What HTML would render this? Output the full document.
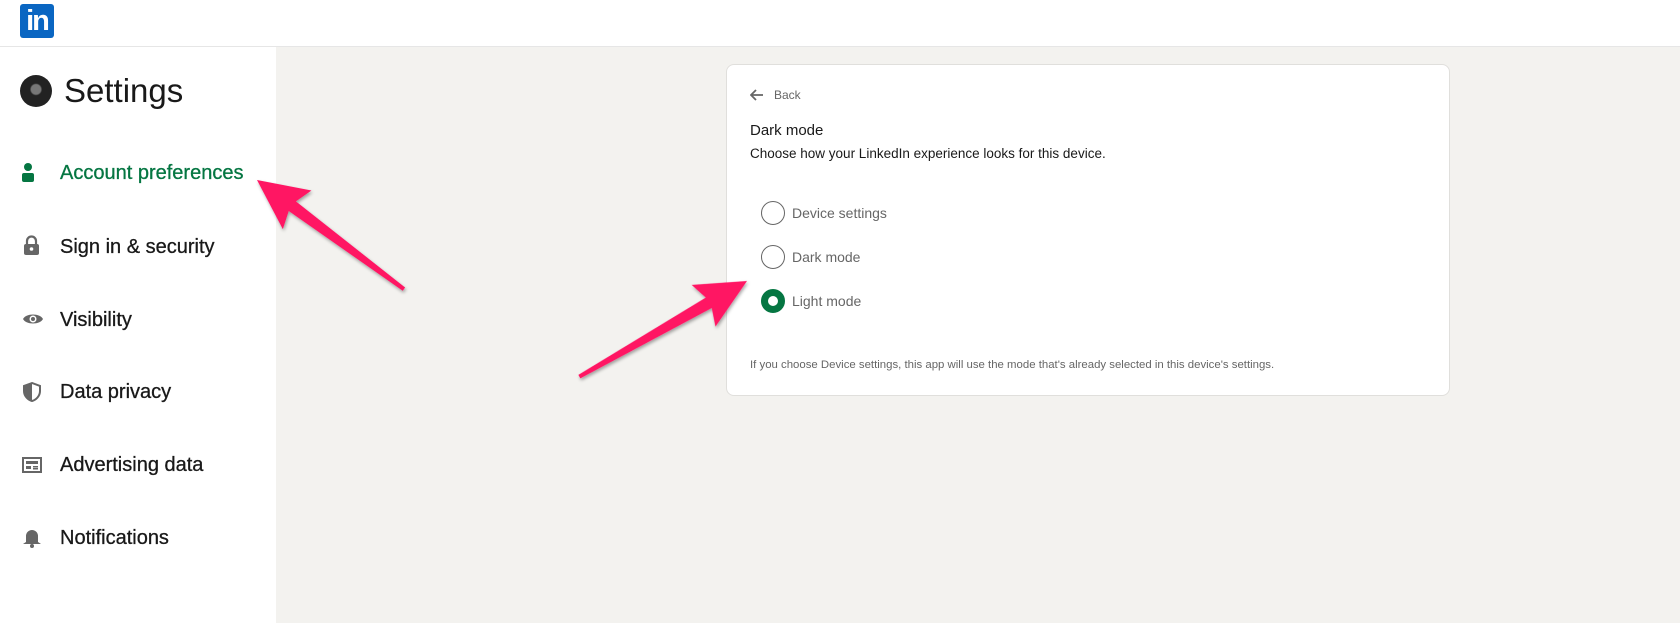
<!DOCTYPE html>
<html><head><meta charset="utf-8"><style>
*{margin:0;padding:0;box-sizing:border-box}
body{width:1680px;height:623px;overflow:hidden;background:#f3f2ef;font-family:"Liberation Sans",sans-serif;position:relative}
.hdr{position:absolute;left:0;top:0;width:1680px;height:47px;background:#fff;border-bottom:1px solid #e6e6e6}
.logo{position:absolute;left:20px;top:4px;width:34px;height:34px;background:#0a66c2;border-radius:3px;color:#fff;font-weight:bold;font-size:29px;line-height:35px;text-align:center;letter-spacing:-2px}
.side{position:absolute;left:0;top:47px;width:276px;height:576px;background:#fff}
.av{position:absolute;left:20px;top:75px;width:32px;height:32px;border-radius:50%;background:radial-gradient(circle at 50% 45%,#777 0 20%,#222 26%)}
.title{position:absolute;left:64px;top:72px;font-size:33px;color:#191919}
.item{position:absolute;left:60px;font-size:20px;color:#191919;line-height:24px;-webkit-text-stroke:0.3px currentColor}
.ic{position:absolute;left:22px}
.card{position:absolute;left:726px;top:64px;width:724px;height:332px;background:#fff;border-radius:8px;border:1px solid #e0dfdc}
.t{position:absolute;white-space:nowrap}
.radio{position:absolute;left:761px;width:24px;height:24px;border-radius:50%;border:1.5px solid #666}
</style></head><body>
<div class="hdr"><div class="logo">in</div></div>
<div class="side"></div>
<div class="av"></div>
<div class="title">Settings</div>
<svg class="ic" style="top:163px" width="12" height="20" viewBox="0 0 12 20"><circle cx="6" cy="4" r="4" fill="#057642"/><rect x="0" y="10" width="12" height="9" rx="2" fill="#057642"/></svg>
<div class="item" style="top:161px;color:#057642">Account preferences</div>
<svg class="ic" style="top:235px;left:23px" width="17" height="20" viewBox="0 0 17 20"><path d="M4 9V6a4.5 4.5 0 0 1 9 0v3" stroke="#666" stroke-width="2.2" fill="none"/><rect x="1" y="9" width="15" height="11" rx="2" fill="#666"/><circle cx="8.5" cy="14" r="1.8" fill="#fff"/></svg>
<div class="item" style="top:235px">Sign in &amp; security</div>
<svg class="ic" style="top:312px" width="22" height="14" viewBox="0 0 22 14"><path d="M1 7C4 1 18 1 21 7C18 13 4 13 1 7Z" fill="#666"/><circle cx="11" cy="7" r="3.5" fill="#fff"/><circle cx="11" cy="7" r="2" fill="#666"/></svg>
<div class="item" style="top:308px">Visibility</div>
<svg class="ic" style="top:382px;left:23px" width="18" height="20" viewBox="0 0 18 20"><path d="M9 1L1 4v5c0 5 4 9 8 10 4-1 8-5 8-10V4z" fill="none" stroke="#666" stroke-width="2"/><path d="M9 1v18c-4-1-8-5-8-10V4z" fill="#666"/></svg>
<div class="item" style="top:380px">Data privacy</div>
<svg class="ic" style="top:457px" width="20" height="16" viewBox="0 0 20 16"><rect x="1" y="1" width="18" height="14" fill="none" stroke="#666" stroke-width="2"/><rect x="4" y="4" width="12" height="3" fill="#666"/><rect x="4" y="9" width="5" height="3" fill="#666"/><rect x="11" y="9" width="5" height="1.5" fill="#666"/><rect x="11" y="11" width="5" height="1.5" fill="#666"/></svg>
<div class="item" style="top:453px">Advertising data</div>
<svg class="ic" style="top:528px" width="20" height="20" viewBox="0 0 20 20"><path d="M4 14V8a6 6 0 0 1 12 0v6l3 2H1z" fill="#666"/><circle cx="10" cy="18" r="2" fill="#666"/></svg>
<div class="item" style="top:526px">Notifications</div>

<div class="card"></div>
<svg style="position:absolute;left:750px;top:89px" width="14" height="12" viewBox="0 0 14 12"><path d="M13 6H2M6 1L1 6l5 5" stroke="#666" stroke-width="1.8" fill="none"/></svg>
<div class="t" style="left:774px;top:88px;font-size:12px;color:#666">Back</div>
<div class="t" style="left:750px;top:122px;font-size:15px;color:#191919">Dark mode</div>
<div class="t" style="left:750px;top:146px;font-size:13.5px;color:#191919">Choose how your LinkedIn experience looks for this device.</div>
<div class="radio" style="top:201px"></div>
<div class="t" style="left:792px;top:205px;font-size:14px;color:#666">Device settings</div>
<div class="radio" style="top:245px"></div>
<div class="t" style="left:792px;top:249px;font-size:14px;color:#666">Dark mode</div>
<div class="radio" style="top:289px;border:7px solid #057642"></div>
<div class="t" style="left:792px;top:293px;font-size:14px;color:#666">Light mode</div>
<div class="t" style="left:750px;top:359px;font-size:11.4px;color:#666">If you choose Device settings, this app will use the mode that's already selected in this device's settings.</div>

<svg style="position:absolute;left:0;top:0" width="1680" height="623">
<defs><filter id="s"><feDropShadow dx="1" dy="2" stdDeviation="1.5" flood-opacity="0.35"/></filter></defs>
<g filter="url(#s)" fill="#ff1464">
<polygon transform="translate(257,180) rotate(36.6)" points="0,0 50,-24 44,-6 183,-2 183,2 44,6 50,24"/>
<polygon transform="translate(747,281) rotate(150.3)" points="0,0 50,-24 44,-6 193,-2 193,2 44,6 50,24"/>
</g></svg>
</body></html>
